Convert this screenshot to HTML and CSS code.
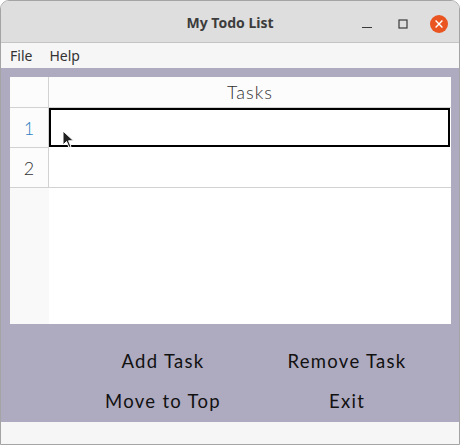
FILE: index.html
```html
<!DOCTYPE html>
<html>
<head>
<meta charset="utf-8">
<link rel="stylesheet" href="styles.css">
</head>
<body>
<div class="window">
  <div class="titlebar">
    <div class="title">My Todo List</div>
    <div class="controls">
      <span class="ctl min"><svg width="12" height="12" viewBox="0 0 12 12"><line x1="1" y1="9.5" x2="11" y2="9.5" stroke="#3a3a3a" stroke-width="1.2"/></svg></span>
      <span class="ctl max"><svg width="12" height="12" viewBox="0 0 12 12"><rect x="2" y="2" width="8" height="8" fill="none" stroke="#3a3a3a" stroke-width="1.2"/></svg></span>
      <span class="ctl close"><svg width="18" height="18" viewBox="0 0 18 18"><circle cx="9" cy="9" r="9" fill="#e95420"/><path d="M5.6 5.6 L12.4 12.4 M12.4 5.6 L5.6 12.4" stroke="#fff" stroke-width="1.4"/></svg></span>
    </div>
  </div>
  <div class="menubar">
    <span class="menu">File</span>
    <span class="menu">Help</span>
  </div>
  <div class="main">
    <div class="table">
      <div class="corner"></div>
      <div class="hhead">Tasks</div>
      <div class="vhead sel">1</div>
      <div class="cell current"></div>
      <div class="vhead">2</div>
      <div class="cell"></div>
      <div class="vfill"></div>
      <div class="fill"></div>
      <svg class="cursor" width="14" height="20" viewBox="0 0 14 20"><path d="M1 1 L1 15 L4.5 11.5 L7 17.5 L9 16.6 L6.6 10.8 L11.5 10.8 Z" fill="#222" stroke="#fff" stroke-width="1"/></svg>
    </div>
    <div class="buttons">
      <div class="btn">Add Task</div>
      <div class="btn">Remove Task</div>
      <div class="btn">Move to Top</div>
      <div class="btn">Exit</div>
    </div>
  </div>
  <div class="status"></div>
</div>
</body>
</html>
```
FILE: styles.css
```css
html, body {
  margin: 0;
  padding: 0;
  background: #ffffff;
}
.window {
  width: 460px;
  height: 445px;
  box-sizing: border-box;
  border: 1px solid #a4a4a4;
  border-radius: 9px 9px 0 0;
  overflow: hidden;
  display: flex;
  flex-direction: column;
  background: #f6f6f6;
}
.titlebar {
  height: 41px;
  flex: none;
  background: #dedede;
  border-bottom: 1px solid #c4c4c4;
  position: relative;
  display: flex;
  align-items: center;
  justify-content: center;
}
.title {
  font-family: "Noto Sans", "DejaVu Sans", sans-serif;
  font-weight: bold;
  font-size: 14px;
  color: #3c3c3c;
  margin-top: 1px;
}
.controls {
  position: absolute;
  right: 11px;
  top: 14px;
  display: flex;
  align-items: center;
}
.ctl {
  display: flex;
  align-items: center;
  justify-content: center;
}
.min { width: 12px; margin-right: 24px; }
.max { width: 12px; margin-right: 21px; }
.close { width: 18px; }
.menubar {
  height: 25px;
  flex: none;
  background: #f6f6f6;
  display: flex;
  align-items: center;
  padding-left: 9px;
  gap: 17px;
  font-family: "Noto Sans", "DejaVu Sans", sans-serif;
  font-size: 14px;
  color: #333333;
}
.main {
  flex: none;
  background: #aeaabf;
  padding: 9px 8px 0 9px;
  height: 354px;
  box-sizing: border-box;
}
.table {
  position: relative;
  height: 247px;
  background: #ffffff;
  display: grid;
  grid-template-columns: 39px 1fr;
  grid-template-rows: 31px 40px 40px 1fr;
  font-family: "Lato", sans-serif;
}
.corner {
  background: #fcfcfc;
  border-right: 1px solid #d2d2d2;
  border-bottom: 1px solid #d2d2d2;
}
.hhead {
  background: #fcfcfc;
  border-bottom: 1px solid #d2d2d2;
  display: flex;
  align-items: center;
  justify-content: center;
  font-size: 18px;
  font-weight: 300;
  letter-spacing: 1px;
  color: #2e2e2e;
}
.vhead {
  background: #fcfcfc;
  border-right: 1px solid #d2d2d2;
  border-bottom: 1px solid #d2d2d2;
  display: flex;
  align-items: center;
  justify-content: center;
  font-size: 18px;
  font-weight: 300;
  color: #333333;
}
.vhead.sel { color: #2f7fc1; }
.cell {
  border-bottom: 1px solid #d2d2d2;
}
.cell.current {
  border: 2px solid #000000;
  margin: 0 1px 1px 0;
}
.vfill { background: #f9f9f9; }
.fill { background: #ffffff; }
.cursor {
  position: absolute;
  left: 52px;
  top: 53px;
}
.buttons {
  display: grid;
  grid-template-columns: 184px 184px;
  grid-template-rows: 40px 40px;
  padding: 17px 0 0 61px;
  font-family: "Lato", sans-serif;
  font-size: 18.5px;
  letter-spacing: 1.3px;
  color: #111111;
}
.btn {
  display: flex;
  align-items: center;
  justify-content: center;
}
.status {
  flex: 1;
  background: #f6f6f6;
}
```
